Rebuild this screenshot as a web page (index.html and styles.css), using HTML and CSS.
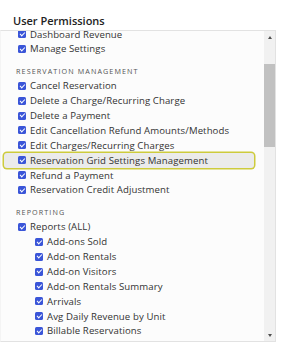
FILE: index.html
```html
<!DOCTYPE html>
<html lang="en">
<head>
    <meta charset="UTF-8">
    <meta name="viewport" content="width=device-width, initial-scale=1.0">
    <title>User Permissions</title>
    <link rel="stylesheet" href="styles.css">
</head>
<body>
    <h2 class="title">User Permissions</h2>

    <div class="perm-box">
        <div class="perm-list">
            <div class="perm-inner">
                <div class="perm"><span class="check"></span>Dashboard Revenue</div>
                <div class="perm"><span class="check"></span>Manage Settings</div>

                <div class="perm-group">Reservation Management</div>
                <div class="perm"><span class="check"></span>Cancel Reservation</div>
                <div class="perm"><span class="check"></span>Delete a Charge/Recurring Charge</div>
                <div class="perm"><span class="check"></span>Delete a Payment</div>
                <div class="perm"><span class="check"></span>Edit Cancellation Refund Amounts/Methods</div>
                <div class="perm"><span class="check"></span>Edit Charges/Recurring Charges</div>
                <div class="perm selected"><span class="check"></span>Reservation Grid Settings Management</div>
                <div class="perm"><span class="check"></span>Refund a Payment</div>
                <div class="perm"><span class="check"></span>Reservation Credit Adjustment</div>

                <div class="perm-group">Reporting</div>
                <div class="perm"><span class="check"></span>Reports (ALL)</div>
                <div class="perm sub"><span class="check"></span>Add-ons Sold</div>
                <div class="perm sub"><span class="check"></span>Add-on Rentals</div>
                <div class="perm sub"><span class="check"></span>Add-on Visitors</div>
                <div class="perm sub"><span class="check"></span>Add-on Rentals Summary</div>
                <div class="perm sub"><span class="check"></span>Arrivals</div>
                <div class="perm sub"><span class="check"></span>Avg Daily Revenue by Unit</div>
                <div class="perm sub"><span class="check"></span>Billable Reservations</div>
            </div>
        </div>

        <!-- fake scrollbar -->
        <div class="scrollbar">
            <div class="arrow up"></div>
            <div class="track">
                <div class="thumb"></div>
            </div>
            <div class="arrow down"></div>
        </div>
    </div>
</body>
</html>
```

FILE: styles.css
```css
body {
    margin: 0;
    background: #fff;
    font-family: "Open Sans", Arial, sans-serif;
    color: #333;
}
.title {
    margin: 0;
    padding: 13px 0 0 13px;
    height: 17px;
    line-height: 16px;
    font-size: 11px;
    font-weight: 600;
    color: #222;
}
.perm-box {
    display: flex;
    width: 274px;
    height: 310px;
    border: 1px solid #e2e2e2;
    border-left-color: #f4f4f4;
    background: #fcfcfc;
}
.perm-list {
    flex: 1;
    overflow: hidden;
}
.perm-inner {
    margin-top: -4.4px;
    padding: 0 10px 0 3px;
}
.perm {
    display: flex;
    align-items: center;
    height: 14.86px;
    padding-left: 14px;
    font-size: 9.6px;
    letter-spacing: 0.1px;
    white-space: nowrap;
    color: #333;
}
.perm.sub {
    padding-left: 31px;
}
.selected {
    background: #ebebeb;
    border-radius: 3px;
    box-shadow: 0 0 0 1.5px #cdcb3c;
}
.check {
    position: relative;
    width: 8px;
    height: 8px;
    margin-right: 4px;
    border-radius: 1.5px;
    background: #3a55d8;
    flex-shrink: 0;
}
.check::after {
    content: "";
    position: absolute;
    left: 2.6px;
    top: 0.8px;
    width: 1.8px;
    height: 4px;
    border: solid #fff;
    border-width: 0 1.4px 1.4px 0;
    transform: rotate(45deg);
}
.perm-group {
    margin-top: 7.3px;
    height: 14.86px;
    line-height: 14.86px;
    padding-left: 12px;
    font-size: 7.2px;
    letter-spacing: 1.1px;
    text-transform: uppercase;
    color: #555;
}
.scrollbar {
    display: flex;
    flex-direction: column;
    width: 11px;
    background: #f1f1f1;
}
.arrow {
    height: 12px;
    display: flex;
    justify-content: center;
    align-items: center;
}
.arrow::after {
    content: "";
    border-left: 2.5px solid transparent;
    border-right: 2.5px solid transparent;
}
.arrow.up::after {
    border-bottom: 3px solid #505050;
}
.arrow.down::after {
    border-top: 3px solid #505050;
}
.track {
    flex: 1;
    padding-top: 21px;
}
.thumb {
    height: 83px;
    background: #c1c1c1;
}
```
